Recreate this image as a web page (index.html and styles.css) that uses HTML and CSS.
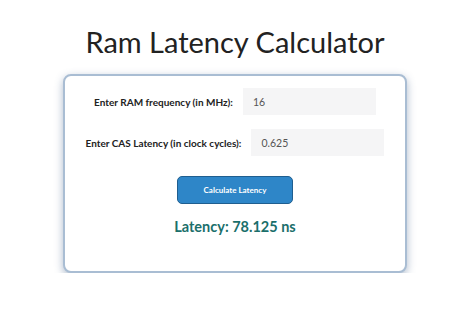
FILE: index.html
```html
<!DOCTYPE html>
<html lang="en">
	<head>
		<title>Ram Latency Calculator</title>
		<link rel="stylesheet" href="styles.css">
	</head>
	<body>
		<h1>Ram Latency Calculator</h1>
		<div class="container">
			<div class="input-row">
				<label for="frequency">Enter RAM frequency (in MHz):</label>
				<input type="text" id="frequency" value="16">
			</div>
			<div class="input-row">
				<label for="cas">Enter CAS Latency (in clock cycles):</label>
				<input type="text" id="cas" value="0.625">
			</div>
			<button>Calculate Latency</button>
			<p class="result">Latency: 78.125 ns</p>
		</div>
	</body>
</html>
```

FILE: styles.css
```css
body {
	font-family: Lato, "Noto Sans", sans-serif;
	background-color: #fff;
	margin: 0;
	padding: 20px 4px 0 0;
	text-align: center;
}
h1 {
	color: #222;
	font-weight: 400;
	font-size: 29px;
	margin: 0 0 10px 0;
	line-height: 44px;
}
.container {
	width: 340px;
	margin: 0 auto;
	padding: 12px 0 0 0;
	height: 183px;
	border: 2px solid #a9bdd3;
	border-radius: 8px;
	box-shadow: 0px 3px 8px rgba(70, 100, 140, 0.45);
	background: #fff;
}
.input-row {
	display: flex;
	justify-content: center;
	align-items: center;
	gap: 10px;
	margin-bottom: 14px;
}
label {
	font-size: 10px;
	font-weight: 700;
	color: #222;
}
input {
	width: 133px;
	height: 27px;
	box-sizing: border-box;
	border: none;
	background: #f5f5f6;
	padding: 0 10px;
	font-family: inherit;
	font-size: 10.5px;
	color: #555;
}
button {
	margin-top: 6px;
	width: 116px;
	height: 28px;
	background-color: #2e86c8;
	color: #fff;
	border: 1px solid #1f5e8f;
	border-radius: 5px;
	font-family: inherit;
	font-size: 8px;
	font-weight: 700;
}
.result {
	color: #1b6f6b;
	font-size: 14.5px;
	font-weight: 700;
	margin: 14px 0 0 0;
}
```
